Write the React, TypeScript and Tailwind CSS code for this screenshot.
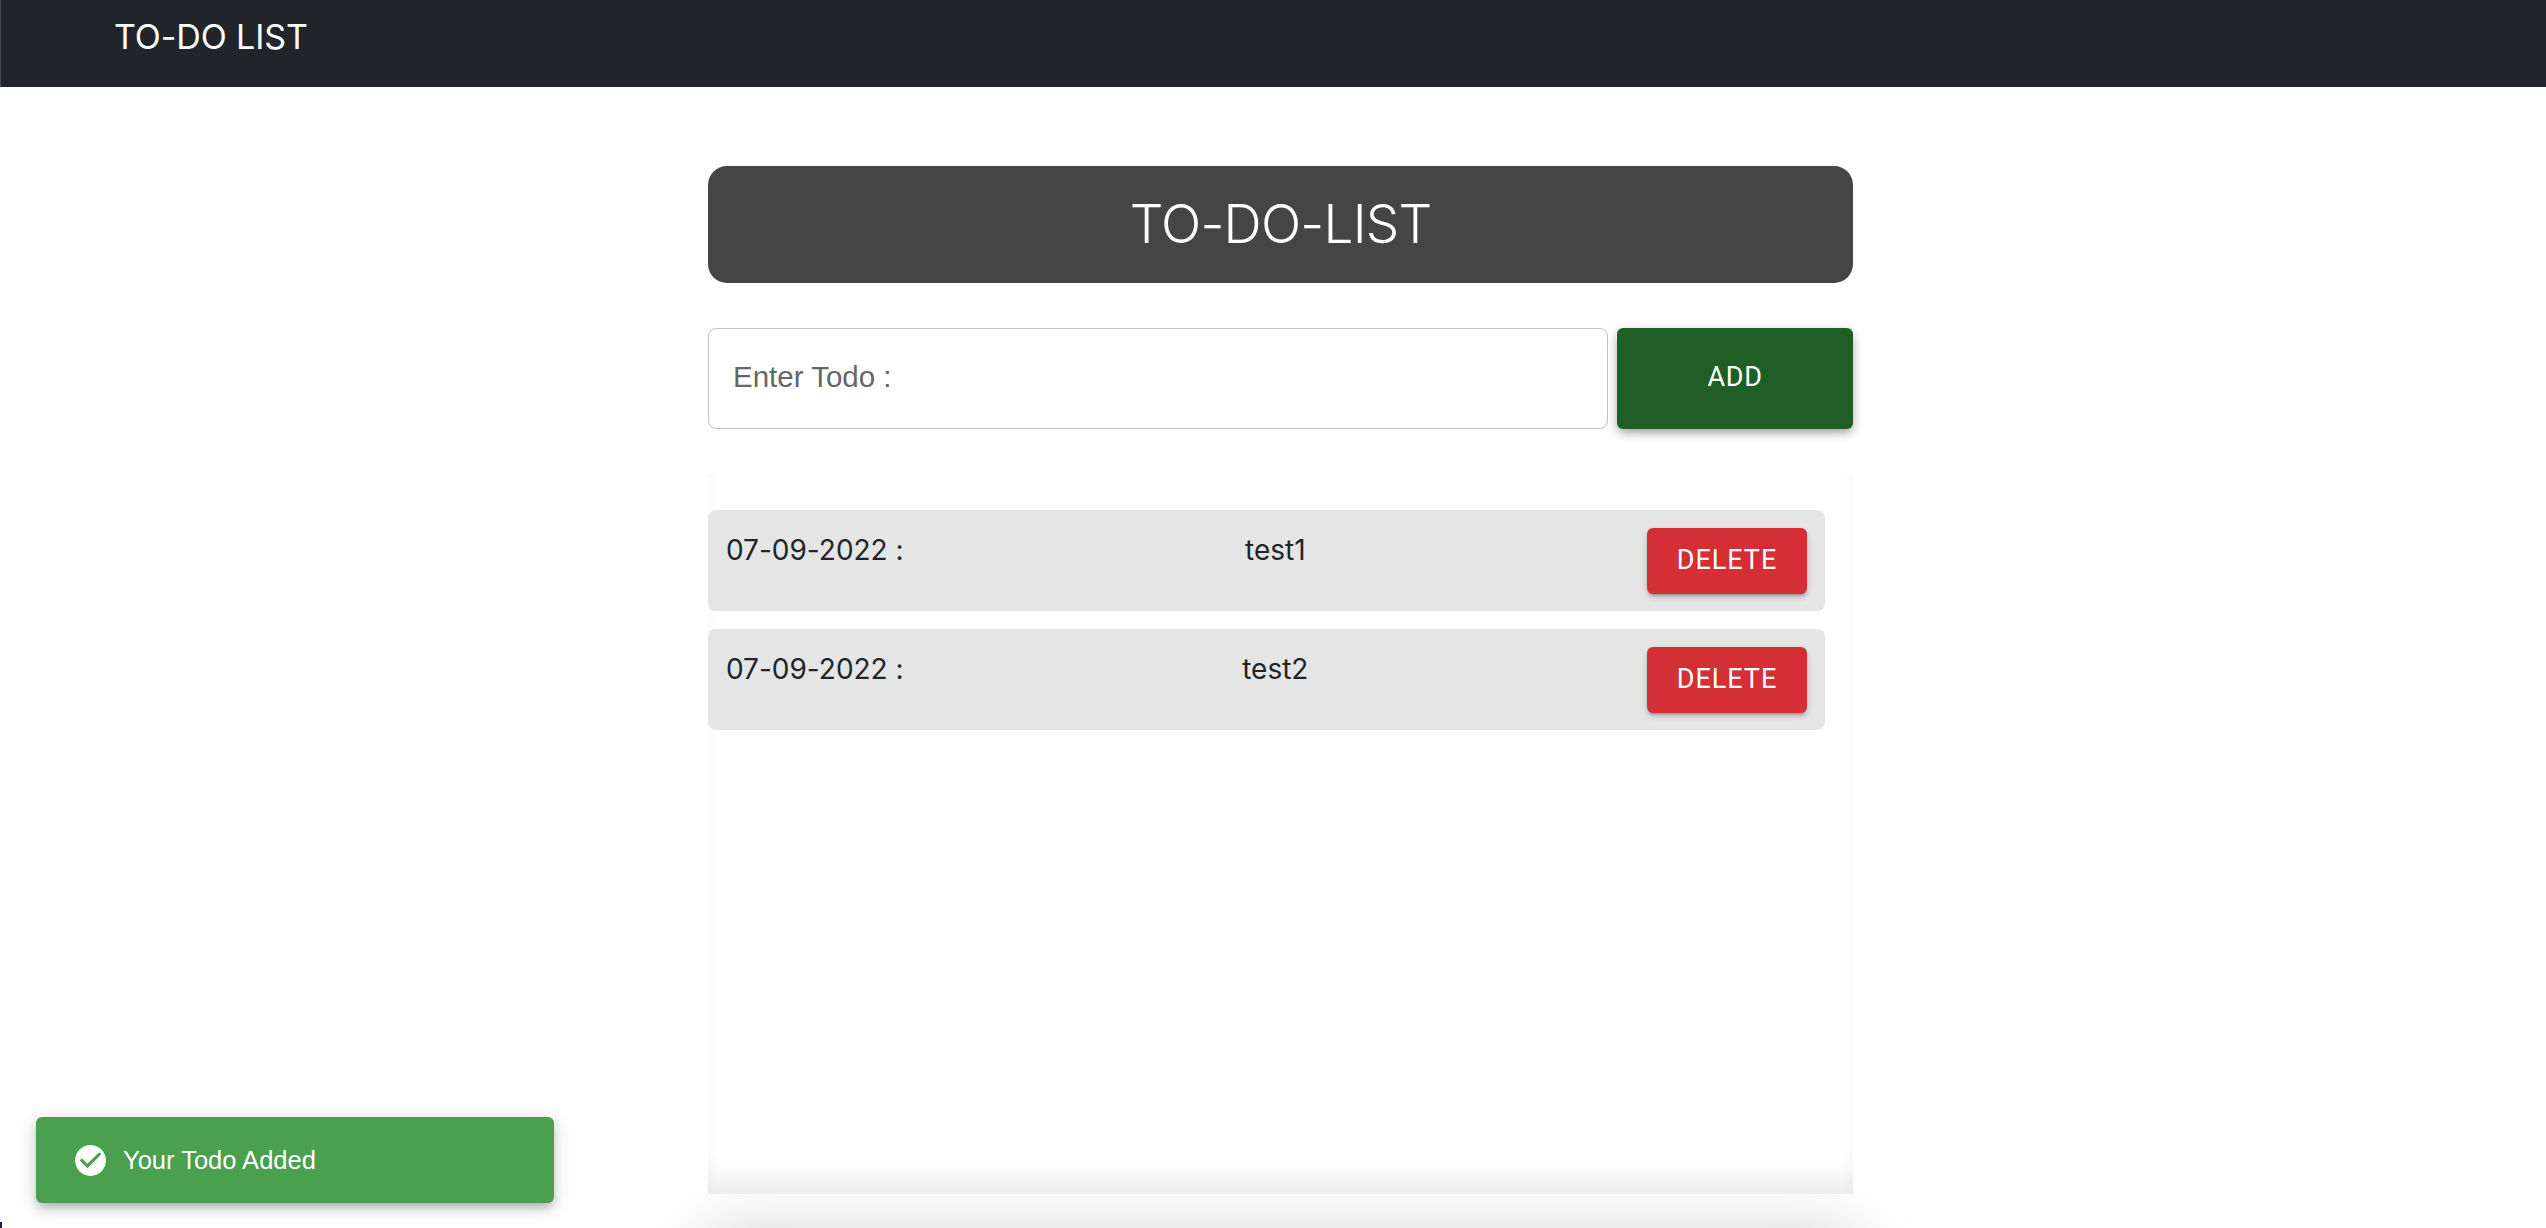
const todos = [
  { id: 1, date: '07-09-2022 :', text: 'test1' },
  { id: 2, date: '07-09-2022 :', text: 'test2' },
];

export default function App() {
  return (
    <div className="relative h-screen overflow-hidden bg-white font-['Inter',sans-serif]">
      <nav className="flex h-[87px] items-center border-l border-[#44474b] bg-[#212529] pb-[14px] pl-[113px]">
        <span className="text-[34px] leading-none tracking-[-0.1px] text-white">TO-DO LIST</span>
      </nav>

      <main className="ml-[708px] w-[1145px] pt-[79px]">
        <div className="flex h-[117px] items-center justify-center rounded-[19px] bg-[#454545]">
          <h1 className="text-[53px] font-[350] leading-none tracking-[-0.8px] text-white">TO-DO-LIST</h1>
        </div>

        <div className="mt-[45px] flex gap-[9px]">
          <input
            type="text"
            placeholder="Enter Todo :"
            className="h-[101px] w-[900px] rounded-[8px] border border-[#c4c4c4] bg-white px-[24px] pb-[4px] font-['Liberation_Sans',sans-serif] text-[29.5px] text-[#222] outline-none placeholder:text-[#666]"
          />
          <button className="h-[101px] flex-1 rounded-[6px] bg-[#1f5f26] pb-[2px] font-['Roboto',sans-serif] text-[27px] tracking-[0.7px] text-white shadow-[0_5px_8px_-2px_rgba(0,0,0,0.3),0_3px_14px_1px_rgba(0,0,0,0.14)]">
            ADD
          </button>
        </div>

        <section className="relative z-10 mt-[45px] h-[720px] bg-white pt-[36px] pr-[28px] shadow-[inset_0_-30px_30px_-18px_rgba(0,0,0,0.09),inset_14px_0_14px_-10px_rgba(0,0,0,0.025),inset_-14px_0_14px_-10px_rgba(0,0,0,0.025)]">
          <div className="flex flex-col gap-[18px]">
            {todos.map((todo) => (
              <div
                key={todo.id}
                className="flex h-[101px] items-start justify-between rounded-[8px] bg-[#e5e5e5] pl-[18px] pr-[18px] pt-[18px] text-[28px] text-[#212529]"
              >
                <span className="pt-[2px] leading-[40px] [font-feature-settings:'calt'_0]">{todo.date}</span>
                <span className="pt-[2px] leading-[40px]">{todo.text}</span>
                <button className="flex h-[66px] w-[160px] items-center justify-center rounded-[6px] bg-[#d32f35] pb-[1px] font-['Roboto',sans-serif] text-[27px] tracking-[1px] text-white shadow-[0_3px_3px_-2px_rgba(0,0,0,0.3),0_3px_6px_0_rgba(0,0,0,0.2)]">
                  DELETE
                </button>
              </div>
            ))}
          </div>
        </section>
        <div className="mt-[44px] h-[80px] shadow-[0_0_70px_rgba(0,0,0,0.22)]" />
      </main>

      <div className="absolute bottom-[25px] left-[36px] z-20 flex h-[86px] w-[518px] items-center rounded-[6px] bg-[#4aa04e] pl-[36px] font-['Liberation_Sans',sans-serif] text-[25.5px] text-white shadow-[0_6px_10px_-2px_rgba(0,0,0,0.25),0_4px_20px_2px_rgba(0,0,0,0.12)]">
        <svg viewBox="0 0 24 24" className="h-[37px] w-[37px] fill-white">
          <path d="M12 2C6.48 2 2 6.48 2 12s4.48 10 10 10 10-4.48 10-10S17.52 2 12 2zm-2 15-5-5 1.41-1.41L10 14.17l7.59-7.59L19 8l-9 9z" />
        </svg>
        <span className="ml-[14px]">Your Todo Added</span>
      </div>

      <div className="absolute bottom-0 left-0 h-[6px] w-[2px] bg-[#1b1b5e]" />
    </div>
  );
}
